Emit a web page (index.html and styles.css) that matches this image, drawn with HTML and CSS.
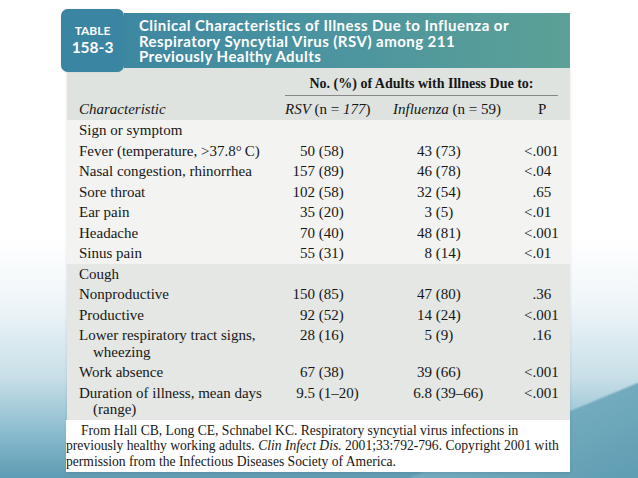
FILE: index.html
```html
<!DOCTYPE html>
<html>
<head>
<meta charset="utf-8">
<link rel="stylesheet" href="styles.css">
</head>
<body>
<div class="slide">
  <div class="card">
    <div class="head">
      <div class="badge"><span class="b1">TABLE</span><span class="b2">158-3</span></div>
      <div class="title">Clinical Characteristics of Illness Due to Influenza or<br>Respiratory Syncytial Virus (RSV) among 211<br>Previously Healthy Adults</div>
    </div>
    <div class="tbl">
      <div class="thead">
        <div class="row"><div class="spanhead">No. (%) of Adults with Illness Due to:</div></div>
        <div class="row hrow">
          <div class="c1"><i>Characteristic</i></div>
          <div class="h-rsv"><i>RSV</i> (n = <i>177</i>)</div>
          <div class="h-inf"><i>Influenza</i> (n = 59)</div>
          <div class="h-p">P</div>
        </div>
      </div>
      <div class="sect light">
        <div class="row"><div class="c1">Sign or symptom</div></div>
        <div class="row"><div class="c1">Fever (temperature, &gt;37.8°&#8201;C)</div><div class="n">50</div><div class="q">(58)</div><div class="n">43</div><div class="q">(73)</div><div class="p">&lt;.001</div></div>
        <div class="row"><div class="c1">Nasal congestion, rhinorrhea</div><div class="n">157</div><div class="q">(89)</div><div class="n">46</div><div class="q">(78)</div><div class="p">&lt;.04</div></div>
        <div class="row"><div class="c1">Sore throat</div><div class="n">102</div><div class="q">(58)</div><div class="n">32</div><div class="q">(54)</div><div class="p nolt">.65</div></div>
        <div class="row"><div class="c1">Ear pain</div><div class="n">35</div><div class="q">(20)</div><div class="n">3</div><div class="q">(5)</div><div class="p">&lt;.01</div></div>
        <div class="row"><div class="c1">Headache</div><div class="n">70</div><div class="q">(40)</div><div class="n">48</div><div class="q">(81)</div><div class="p">&lt;.001</div></div>
        <div class="row"><div class="c1">Sinus pain</div><div class="n">55</div><div class="q">(31)</div><div class="n">8</div><div class="q">(14)</div><div class="p">&lt;.01</div></div>
      </div>
      <div class="sect grey">
        <div class="row"><div class="c1">Cough</div></div>
        <div class="row"><div class="c1">Nonproductive</div><div class="n">150</div><div class="q">(85)</div><div class="n">47</div><div class="q">(80)</div><div class="p nolt">.36</div></div>
        <div class="row"><div class="c1">Productive</div><div class="n">92</div><div class="q">(52)</div><div class="n">14</div><div class="q">(24)</div><div class="p">&lt;.001</div></div>
        <div class="row"><div class="c1">Lower respiratory tract signs, wheezing</div><div class="n">28</div><div class="q">(16)</div><div class="n">5</div><div class="q">(9)</div><div class="p nolt">.16</div></div>
        <div class="row"><div class="c1">Work absence</div><div class="n">67</div><div class="q">(38)</div><div class="n">39</div><div class="q">(66)</div><div class="p">&lt;.001</div></div>
        <div class="row"><div class="c1">Duration of illness, mean days (range)</div><div class="n">9.5</div><div class="q">(1–20)</div><div class="n">6.8</div><div class="q">(39–66)</div><div class="p">&lt;.001</div></div>
      </div>
      <div class="foot">
        <span class="ind">From Hall CB, Long CE, Schnabel KC. Respiratory syncytial virus infections in</span><br>previously healthy working adults. <i>Clin Infect Dis.</i> 2001;33:792-796. Copyright 2001 with<br>permission from the Infectious Diseases Society of America.
      </div>
    </div>
  </div>
</div>
</body>
</html>
```

FILE: styles.css
```css
* { box-sizing: border-box; }
html, body {
  margin: 0;
  padding: 0;
  width: 638px;
  height: 478px;
  overflow: hidden;
}
body {
  background-color: #ffffff;
  background-image:
    linear-gradient(157.4deg, rgba(110, 168, 186, 0) 87%, #72abbd 87.4%, #5f9db3 100%),
    linear-gradient(180deg, #ffffff 0%, #ffffff 50%, #eef5f8 64%, #c8dfe8 79%, #88bacd 91%, #5d9bb3 100%);
}
.slide {
  padding: 9px 0 0 61px;
}
.card {
  width: 509px;
}
.head {
  display: flex;
  align-items: flex-start;
  position: relative;
  z-index: 1;
}
.badge {
  width: 63px;
  height: 63px;
  margin-bottom: -4px;
  border-radius: 7px;
  background: #3a85a1;
  box-shadow: 0 0 1px rgba(0, 0, 0, 0.3);
  color: #ffffff;
  font-family: Lato, "Open Sans", sans-serif;
  font-weight: 700;
  display: flex;
  flex-direction: column;
  align-items: center;
  justify-content: center;
  line-height: 1;
  flex-shrink: 0;
}
.b1 { font-size: 12px; margin-bottom: 3px; }
.b2 { font-size: 15.5px; }
.title {
  flex: 1;
  margin-top: 4px;
  height: 55px;
  padding: 5px 0 0 15px;
  background: linear-gradient(90deg, #3d87a1 0%, #4b94a0 45%, #5ca096 100%);
  color: #ffffff;
  font-family: Lato, "Open Sans", sans-serif;
  font-weight: 700;
  font-size: 15px;
  letter-spacing: 0.45px;
  line-height: 15.7px;
  white-space: nowrap;
}
.tbl {
  margin-left: 6px;
  width: 503px;
  font-family: "Liberation Serif", "Times New Roman", serif;
  font-size: 15px;
  color: #161616;
  box-shadow: 0 1px 3px rgba(0, 0, 0, 0.12);
}
.row {
  display: grid;
  grid-template-columns: 218px 30px 75px 42px 92px 46px;
  line-height: 16.5px;
}
.sect .row {
  padding: 2px 0;
}
.thead {
  background: #dfe3e0;
  padding: 7px 0 2px;
}
.spanhead {
  grid-column: 2 / 7;
  margin-right: 12px;
  text-align: center;
  font-weight: 700;
  font-size: 14px;
  line-height: 18px;
  padding-bottom: 2px;
  border-bottom: 1.5px solid #858885;
}
.hrow {
  margin-top: 4px;
  line-height: 18px;
}
.h-rsv { grid-column: 2 / 4; }
.h-inf { grid-column: 4 / 6; padding-left: 3px; }
.h-p { padding-left: 14px; }
.c1 {
  padding-left: 26px;
  text-indent: -14px;
}
.n { text-align: right; }
.q { padding-left: 3.75px; white-space: nowrap; }
.p { white-space: nowrap; }
.nolt { padding-left: 8.5px; }
.light { background: #f3f4f2; }
.grey { background: #e4e7e4; }
.foot {
  background: #ffffff;
  font-size: 13.6px;
  line-height: 15.5px;
  padding: 3px 0 3px 0;
  margin-left: -1px;
  white-space: nowrap;
}
.ind { padding-left: 15px; }
```
